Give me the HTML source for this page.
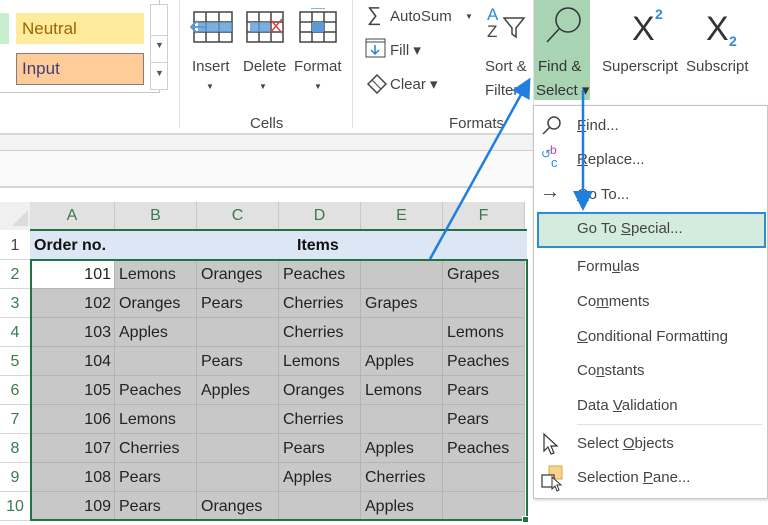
<!DOCTYPE html>
<html><head><meta charset="utf-8"><style>
*{margin:0;padding:0;box-sizing:border-box}
body{width:768px;height:525px;overflow:hidden;background:#fff;font-family:"Liberation Sans",sans-serif;position:relative;color:#444}
.a{position:absolute;white-space:nowrap}
.rb{font-size:15px;color:#444}
.cell{position:absolute;height:29px;line-height:29px;font-size:16px;color:#222;padding-left:4px;border-right:1px solid #b4b4b4;border-bottom:1px solid #b4b4b4;background:#c8c8c8}
.hd{position:absolute;top:202px;height:28px;line-height:28px;text-align:center;font-size:16px;color:#3c7a4e;background:#e1e1e1;border-right:1px solid #c8c8c8}
.rn{position:absolute;left:0;width:30px;height:29px;line-height:29px;text-align:center;font-size:16px;color:#3c7a4e;border-bottom:1px solid #d8d8d8}
.mi{position:absolute;left:577px;font-size:15px;color:#444}
</style></head><body>
<!-- ribbon -->
<div class="a" style="left:0;top:0;width:160px;height:93px;border:1px solid #c6c6c6;border-top:none;border-left:none"></div>
<div class="a" style="left:0;top:13px;width:9px;height:31px;background:#c6efce"></div>
<div class="a" style="left:16px;top:13px;width:128px;height:31px;background:#ffeb9c;color:#9c6500;font-size:17px;line-height:31px;padding-left:6px">Neutral</div>
<div class="a" style="left:16px;top:53px;width:128px;height:32px;background:#ffcc99;border:1px solid #7f7f7f;color:#3f3f76;font-size:17px;line-height:30px;padding-left:5px">Input</div>
<div class="a" style="left:150px;top:4px;width:18px;height:86px;border:1px solid #d0d0d0;background:#fff"></div>
<div class="a" style="left:150px;top:35px;width:18px;height:1px;background:#d0d0d0"></div>
<div class="a" style="left:150px;top:62px;width:18px;height:1px;background:#d0d0d0"></div>
<div class="a" style="left:155px;top:40px;font-size:9px;color:#555">▼</div>
<div class="a" style="left:155px;top:68px;font-size:9px;color:#555">▼</div>
<div class="a" style="left:179px;top:0;width:1px;height:128px;background:#e0e0e0"></div>
<div class="a" style="left:352px;top:0;width:1px;height:128px;background:#e0e0e0"></div>
<div class="a" style="left:533px;top:0;width:1px;height:128px;background:#e0e0e0"></div>
<!-- Cells icons -->
<svg class="a" style="left:190px;top:8px" width="150" height="38">
<g fill="none" stroke="#444" stroke-width="1.5">
<rect x="4" y="4" width="38" height="30"/><line x1="16" y1="4" x2="16" y2="34"/><line x1="29" y1="4" x2="29" y2="34"/><line x1="4" y1="14" x2="42" y2="14"/><line x1="4" y1="24" x2="42" y2="24"/>
<rect x="57" y="4" width="36" height="30"/><line x1="69" y1="4" x2="69" y2="34"/><line x1="81" y1="4" x2="81" y2="34"/><line x1="57" y1="14" x2="93" y2="14"/><line x1="57" y1="24" x2="93" y2="24"/>
<rect x="110" y="4" width="36" height="30"/><line x1="122" y1="4" x2="122" y2="34"/><line x1="134" y1="4" x2="134" y2="34"/><line x1="110" y1="14" x2="146" y2="14"/><line x1="110" y1="24" x2="146" y2="24"/>
</g>
<rect x="8" y="14" width="34" height="10" fill="#5b9bd5" opacity=".8"/>
<path d="M2 19h14M7 13l-6 6 6 6" stroke="#5b9bd5" stroke-width="2" fill="none"/>
<rect x="60" y="14" width="20" height="10" fill="#5b9bd5" opacity=".8"/>
<path d="M80 11l12 14M92 11l-12 14" stroke="#e04040" stroke-width="1.5"/>
<rect x="122" y="14" width="12" height="10" fill="#5b9bd5"/>
<path d="M121 0h14" stroke="#5b9bd5" stroke-width="1.5"/>
</svg>
<div class="a rb" style="left:192px;top:58px">Insert</div>
<div class="a rb" style="left:243px;top:58px">Delete</div>
<div class="a rb" style="left:294px;top:58px">Format</div>
<div class="a" style="left:206px;top:82px;font-size:8px">▼</div>
<div class="a" style="left:259px;top:82px;font-size:8px">▼</div>
<div class="a" style="left:314px;top:82px;font-size:8px">▼</div>
<div class="a rb" style="left:250px;top:115px">Cells</div>
<!-- editing -->
<div class="a" style="left:367px;top:4px;font-size:20px;color:#444">∑</div>
<div class="a rb" style="left:390px;top:8px">AutoSum</div>
<div class="a" style="left:465px;top:12px;font-size:8px">▼</div>
<svg class="a" style="left:365px;top:38px" width="22" height="22"><rect x="1" y="1" width="19" height="18" fill="none" stroke="#444"/><line x1="1" y1="4" x2="20" y2="4" stroke="#444"/><path d="M10 7v9M6 12l4 4 4-4" stroke="#2e7fd6" fill="none" stroke-width="1.5"/></svg>
<div class="a rb" style="left:390px;top:41px">Fill ▾</div>
<svg class="a" style="left:366px;top:72px" width="22" height="22"><path d="M2 12l9-9 9 9-9 9z" fill="none" stroke="#444" stroke-width="1.5"/><path d="M6 8l9 9" stroke="#444"/></svg>
<div class="a rb" style="left:390px;top:75px">Clear ▾</div>
<div class="a" style="left:487px;top:5px;font-size:17px;color:#2e8bd6">A</div>
<div class="a" style="left:487px;top:22px;font-size:17px;color:#444">Z</div>
<svg class="a" style="left:502px;top:16px" width="24" height="24"><path d="M2 2h20l-8 10v9l-4-3v-6z" fill="none" stroke="#444" stroke-width="1.5"/></svg>
<div class="a rb" style="left:485px;top:58px">Sort &amp;</div>
<div class="a rb" style="left:485px;top:81px">Filter ▾</div>
<div class="a rb" style="left:449px;top:115px">Formats</div>
<div class="a" style="left:534px;top:0;width:56px;height:100px;background:#a8d4b4"></div>
<svg class="a" style="left:540px;top:0" width="45" height="50"><circle cx="28" cy="20" r="12" fill="none" stroke="#333" stroke-width="1.5"/><path d="M19 29l-12 13" stroke="#333" stroke-width="1.5"/></svg>
<div class="a rb" style="left:538px;top:58px;color:#333">Find &amp;</div>
<div class="a rb" style="left:536px;top:81px;color:#333">Select ▾</div>
<div class="a" style="left:632px;top:10px;font-size:34px;color:#333">X</div>
<div class="a" style="left:655px;top:6px;font-size:14px;color:#2e8bd6;font-weight:bold">2</div>
<div class="a" style="left:706px;top:10px;font-size:34px;color:#333">X</div>
<div class="a" style="left:729px;top:33px;font-size:14px;color:#2e8bd6;font-weight:bold">2</div>
<div class="a rb" style="left:602px;top:58px">Superscript</div>
<div class="a rb" style="left:686px;top:58px">Subscript</div>
<!-- bars -->
<div class="a" style="left:0;top:133px;width:768px;height:2px;background:#d8d8d8"></div>
<div class="a" style="left:0;top:135px;width:768px;height:15px;background:#f3f3f3"></div>
<div class="a" style="left:0;top:150px;width:768px;height:1px;background:#d0d0d0"></div>
<div class="a" style="left:0;top:151px;width:768px;height:36px;background:#fafafa"></div>
<div class="a" style="left:0;top:186px;width:768px;height:2px;background:#d4d4d4"></div>
<!-- sheet -->
<div class="a" style="left:0;top:202px;width:30px;height:28px;background:#f0f0f0"></div>
<div class="a" style="left:12px;top:210px;width:0;height:0;border-left:16px solid transparent;border-bottom:16px solid #dcdcdc"></div>
<div class="hd" style="left:30px;width:85px">A</div>
<div class="hd" style="left:115px;width:82px">B</div>
<div class="hd" style="left:197px;width:82px">C</div>
<div class="hd" style="left:279px;width:82px">D</div>
<div class="hd" style="left:361px;width:82px">E</div>
<div class="hd" style="left:443px;width:82px">F</div>
<div class="a" style="left:30px;top:229px;width:497px;height:2px;background:#217346"></div>
<div class="rn" style="top:231px;color:#444">1</div>
<div class="a" style="left:30px;top:231px;width:497px;height:29px;background:#dce6f4;font-size:16px;line-height:29px;font-weight:bold;color:#111;padding-left:4px">Order no.</div>
<div class="a" style="left:297px;top:231px;font-size:16px;line-height:29px;font-weight:bold;color:#111">Items</div>
<div id="g"></div>
<script>
var d=[["101","Lemons","Oranges","Peaches","","Grapes"],["102","Oranges","Pears","Cherries","Grapes",""],["103","Apples","","Cherries","","Lemons"],["104","","Pears","Lemons","Apples","Peaches"],["105","Peaches","Apples","Oranges","Lemons","Pears"],["106","Lemons","","Cherries","","Pears"],["107","Cherries","","Pears","Apples","Peaches"],["108","Pears","","Apples","Cherries",""],["109","Pears","Oranges","","Apples",""]];
var xs=[30,115,197,279,361,443,525],h="";
for(var r=0;r<9;r++){var y=260+r*29;h+='<div class="rn" style="top:'+y+'px">'+(r+2)+'</div>';
for(var c=0;c<6;c++){var st='left:'+xs[c]+'px;top:'+y+'px;width:'+(xs[c+1]-xs[c])+'px;';if(c==0){st+='text-align:right;padding-right:3px;';if(r==0)st+='background:#fff;';}
h+='<div class="cell" style="'+st+'">'+d[r][c]+'</div>';}}
document.getElementById('g').innerHTML=h;
</script>
<div class="a" style="left:30px;top:259px;width:498px;height:262px;border:2px solid #217346"></div>
<div class="a" style="left:522px;top:516px;width:7px;height:7px;background:#217346;border:1px solid #fff"></div>
<!-- menu -->
<div class="a" style="left:533px;top:105px;width:235px;height:394px;background:#fff;border:1px solid #c6c6c6;box-shadow:1px 1px 3px rgba(0,0,0,.2)"></div>
<svg class="a" style="left:540px;top:114px" width="24" height="24"><circle cx="14" cy="9" r="6" fill="none" stroke="#444" stroke-width="1.5"/><path d="M10 13l-7 7" stroke="#444" stroke-width="1.5"/></svg>
<div class="mi" style="top:117px"><u>F</u>ind...</div>
<div class="a" style="left:541px;top:147px;font-size:12px;color:#2e8bd6">↺</div>
<div class="a" style="left:550px;top:143px;font-size:12px;color:#c040a0">b</div>
<div class="a" style="left:551px;top:155px;font-size:13px;color:#2e8bd6">c</div>
<div class="mi" style="top:151px"><u>R</u>eplace...</div>
<div class="a" style="left:540px;top:181px;font-size:20px;color:#444">→</div>
<div class="mi" style="top:186px"><u>G</u>o To...</div>
<div class="a" style="left:537px;top:212px;width:229px;height:36px;background:#d3ecdd;border:2px solid #2e8bd6"></div>
<div class="mi" style="top:220px">Go To <u>S</u>pecial...</div>
<div class="mi" style="top:258px">Form<u>u</u>las</div>
<div class="mi" style="top:293px">Co<u>m</u>ments</div>
<div class="mi" style="top:328px"><u>C</u>onditional Formatting</div>
<div class="mi" style="top:362px">Co<u>n</u>stants</div>
<div class="mi" style="top:397px">Data <u>V</u>alidation</div>
<div class="a" style="left:577px;top:424px;width:185px;height:1px;background:#e0e0e0"></div>
<svg class="a" style="left:542px;top:432px" width="18" height="24"><path d="M2 2v17l4-4 3 7 3-1-3-7h6z" fill="#fff" stroke="#333" stroke-width="1.2"/></svg>
<div class="mi" style="top:435px">Select <u>O</u>bjects</div>
<svg class="a" style="left:540px;top:465px" width="26" height="28"><rect x="9" y="1" width="13" height="13" fill="#f8d48a" stroke="#e0a040"/><rect x="2" y="10" width="12" height="12" fill="#fff" stroke="#333" stroke-width="1.2"/><path d="M12 12v12l3-3 2 5 2-1-2-5h4z" fill="#fff" stroke="#333"/></svg>
<div class="mi" style="top:469px">Selection <u>P</u>ane...</div>
<!-- arrows -->
<svg class="a" style="left:0;top:0" width="768" height="525">
<defs><marker id="m" markerWidth="8" markerHeight="8" refX="6" refY="4" orient="auto"><path d="M0 0L8 4 0 8z" fill="#1e7fe0"/></marker></defs>
<line x1="430" y1="259" x2="528" y2="82" stroke="#1e7fe0" stroke-width="2.5" marker-end="url(#m)"/>
<line x1="583" y1="90" x2="583" y2="206" stroke="#1e7fe0" stroke-width="2.5" marker-end="url(#m)"/>
</svg>
</body></html>
